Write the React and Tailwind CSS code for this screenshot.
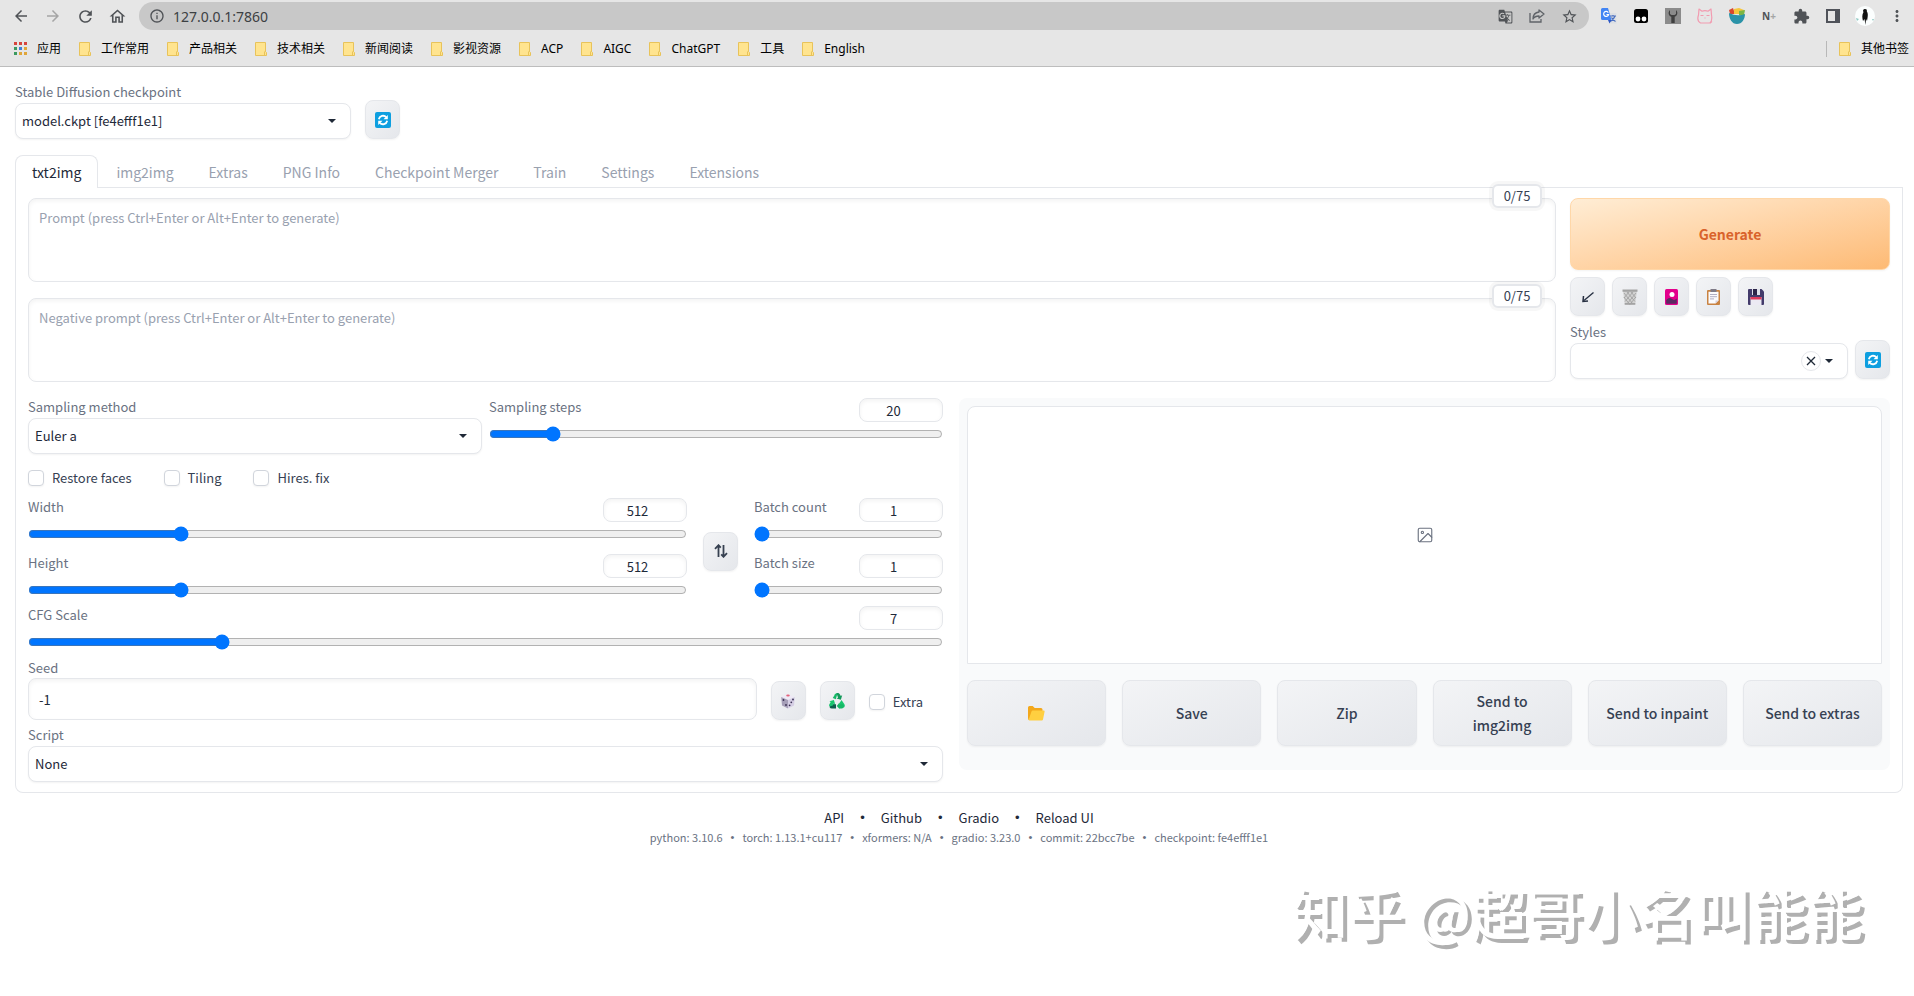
import React, { useState } from "react";
import {
  MdArrowBack,
  MdArrowForward,
  MdRefresh,
  MdOutlineHome,
  MdInfoOutline,
  MdGTranslate,
  MdStarBorder,
  MdExtension,
  MdMoreVert,
} from "react-icons/md";

const bookmarks = ["工作常用", "产品相关", "技术相关", "新闻阅读", "影视资源", "ACP", "AIGC", "ChatGPT", "工具", "English"];

const tabs = ["txt2img", "img2img", "Extras", "PNG Info", "Checkpoint Merger", "Train", "Settings", "Extensions"];

const versions = [
  "python: 3.10.6",
  "torch: 1.13.1+cu117",
  "xformers: N/A",
  "gradio: 3.23.0",
  "commit: 22bcc7be",
  "checkpoint: fe4efff1e1",
];

/* ---------- icons ---------- */

const AppsIcon = () => (
  <svg width="14" height="14" viewBox="0 0 14 14" aria-hidden="true">
    <path fill="#d6453d" d="M0 0h3v3H0zM5 0h3v3H5zM10 0h3v3h-3z" />
    <path fill="#3c9a5f" d="M0 5h3v3H0z" />
    <path fill="#3f7fd6" d="M5 5h3v3H5z" />
    <path fill="#e0a63a" d="M10 5h3v3h-3zM5 10h3v3H5zM10 10h3v3h-3z" />
    <path fill="#3c9a5f" d="M0 10h3v3H0z" />
  </svg>
);

const FolderIcon = () => (
  <svg width="12" height="14" viewBox="0 0 12 14" aria-hidden="true">
    <path d="M.5.5h10v9l1 1v3H.5z" fill="#ffe48f" stroke="#e8c35a" />
    <path d="M9.5 13v-3l1-1" fill="none" stroke="#e8c35a" />
  </svg>
);

const ShareIcon = () => (
  <svg width="16" height="14" viewBox="0 0 16 14" fill="none" stroke="#5f6368" strokeWidth="1.3" aria-hidden="true">
    <path d="M1 4v9h11v-3" />
    <path d="M10 1l5 4-5 4V7C7 7 5 8 4 10c0-4 2-6.500 6-7z" strokeLinejoin="round" />
  </svg>
);

const TranslateExt = () => (
  <svg width="16" height="16" viewBox="0 0 16 16" aria-hidden="true">
    <path d="M6 5h9.500v10.500H8.500z" fill="#dcdfe4" />
    <path d="M0 1.500A1.500 1.500 0 0 1 1.500 0H7l3.500 12h-9A1.500 1.500 0 0 1 0 10.500z" fill="#4285f4" />
    <path d="M7.300 4.600A2.500 2.500 0 1 0 7.600 6.500H5.500" fill="none" stroke="#fff" strokeWidth="1.200" />
    <path d="M9 8h6M12 7v1M14 8c-1 3-3 4.500-4.500 5.500M10.500 9.500c1 2 2 3 4 4" fill="none" stroke="#4a6fbf" strokeWidth="1.200" />
    <path d="M7 12h3.500L8.500 15.500z" fill="#2a56c6" />
  </svg>
);

const MonkeyExt = () => (
  <svg width="14" height="14" viewBox="0 0 14 14" aria-hidden="true">
    <rect width="14" height="14" rx="2.500" fill="#000" />
    <circle cx="4" cy="10" r="2.400" fill="#fff" />
    <circle cx="10" cy="10" r="2.400" fill="#fff" />
  </svg>
);

const WrenchExt = () => (
  <svg width="16" height="16" viewBox="0 0 16 16" aria-hidden="true">
    <rect width="16" height="16" fill="#8b8b8b" />
    <path d="M5 2.200C3 3.500 3 7.500 6.300 8.800V15h3.400V8.800C13 7.500 13 3.500 11 2.200V6L9.500 7h-3L5 6z" fill="#3f3f3f" />
  </svg>
);

const CatExt = () => (
  <svg width="16" height="16" viewBox="0 0 16 16" fill="none" stroke="#f29bb0" strokeWidth="1.200" aria-hidden="true">
    <path d="M2 1l3 2.200q3-1 6 0L14 1l.500 6q1 6-1.500 8H3.500Q-.500 13 1.500 7z" strokeLinejoin="round" />
    <path d="M3.500 7.500h3M9.500 7.500h3M7.500 10h1M13 15l2-1.500" />
  </svg>
);

const BowlExt = () => (
  <svg width="16" height="16" viewBox="0 0 16 16" aria-hidden="true">
    <path d="M0 2l4-2 2 6H1z" fill="#d9482f" />
    <path d="M5 1l5-1 5 2v4H5z" fill="#f6c63c" />
    <path d="M10 3l6-1-1 5h-5z" fill="#7cb645" />
    <path d="M0 5q8 4 16 1c0 5-3 10-8 10S0 11 0 5z" fill="#2b93a8" />
  </svg>
);

const SidePanelIcon = () => (
  <svg width="14" height="14" viewBox="0 0 14 14" aria-hidden="true">
    <path d="M0 0h14v14H0zM2 2v10h7V2z" fill="#50535a" fillRule="evenodd" />
  </svg>
);

const AvatarIcon = () => (
  <svg width="20" height="20" viewBox="0 0 20 20" aria-hidden="true">
    <circle cx="10" cy="10" r="10" fill="#fbfefe" />
    <path d="M1 12l3 1-2 2zM17 13h2l-1 2z" fill="#8fc9c4" />
    <path d="M10 3a1.800 1.800 0 0 1 1.800 2.200C13 7 13 9 12.500 12L12 15l-1-2-.500 6-1-6-1.500 2c-.800-3-1.200-6 .500-9A1.800 1.800 0 0 1 10 3z" fill="#111" />
  </svg>
);

const RefreshIcon = () => (
  <svg width="16" height="16" viewBox="0 0 16 16" aria-hidden="true">
    <rect width="16" height="16" rx="2" fill="#0e9fe0" />
    <path d="M3.800 7.200a4.300 4.300 0 0 1 7.400-2" fill="none" stroke="#fff" strokeWidth="1.800" />
    <path d="M12.200 8.800a4.300 4.300 0 0 1-7.400 2" fill="none" stroke="#fff" strokeWidth="1.800" />
    <path d="M12.800 3v4.300H8.500zM3.200 13V8.700h4.300z" fill="#fff" />
  </svg>
);

const ArrowIcon = () => (
  <svg width="14" height="14" viewBox="0 0 14 14" fill="none" stroke="#273042" strokeWidth="1.300" aria-hidden="true">
    <path d="M12.500 2.500L3 10.500" />
    <path d="M2.500 6l-.500 5.500L7 11" strokeWidth="1.500" />
  </svg>
);

const TrashIcon = () => (
  <svg width="16" height="16" viewBox="0 0 16 16" aria-hidden="true">
    <path d="M1 1.500h14L13.200 15.500H2.800z" fill="#d2d2d2" />
    <path
      d="M2 4l9 11M5 3l8 9.500M9 3l5 6M1.800 8l6 7.500M14 4L5 15M11 3L3 12.500M7 3L2 9M13.800 8l-6 7.500"
      stroke="#9d9d9d"
      strokeWidth=".8"
    />
    <path d="M.500.500h15v2.200H.500zM2.700 14h10.600v1.700H2.700z" fill="#a3a3a3" />
  </svg>
);

const CardIcon = () => (
  <svg width="13" height="16" viewBox="0 0 13 16" aria-hidden="true">
    <rect width="13" height="16" rx="1.500" fill="#e3008c" />
    <path d="M1.200 11q3-3.500 5.500-1.200T11.800 9.500v5.300H1.200z" fill="#5b2a63" />
    <circle cx="7" cy="5.500" r="2.500" fill="#fff" />
  </svg>
);

const ClipboardIcon = () => (
  <svg width="13" height="16" viewBox="0 0 13 16" aria-hidden="true">
    <rect y="1" width="13" height="15" rx="1" fill="#c98342" />
    <path d="M1.500 2.800h10v8.700l-3 3h-7z" fill="#fbfbfd" />
    <path d="M8.500 14.500v-3h3z" fill="#d7d2dd" />
    <path d="M3.500 0h6v3h-6z" fill="#7f7a86" />
    <path d="M3 5.500h7M3 7.700h7M3 9.900h4" stroke="#a9a6bd" strokeWidth=".9" />
  </svg>
);

const FloppyIcon = () => (
  <svg width="16" height="16" viewBox="0 0 16 16" aria-hidden="true">
    <path d="M0 1a1 1 0 0 1 1-1h12.500L16 2.500V15a1 1 0 0 1-1 1H1a1 1 0 0 1-1-1z" fill="#433b6b" />
    <path d="M4 0h8v6H4z" fill="#dfe0ea" />
    <path d="M5 0h4v6H5z" fill="#2c2548" />
    <path d="M2.500 8h11v8h-11z" fill="#eceaf3" />
    <path d="M2.500 8h11v2.500h-11z" fill="#e03a5c" />
  </svg>
);

const DiceIcon = () => (
  <svg width="16" height="16" viewBox="0 0 16 16" aria-hidden="true">
    <path d="M8 1l6.500 3L8 7 1.500 4z" fill="#eee9f5" />
    <path d="M1.200 4L8 7v8.500L2 12.500z" fill="#a69fb8" />
    <path d="M14.800 4L8 7v8.500l6-3z" fill="#d5cee4" />
    <ellipse cx="8" cy="2.500" rx="1.800" ry="1" fill="#e3627a" />
    <circle cx="3.500" cy="7" r=".9" fill="#3a3153" />
    <circle cx="6" cy="12" r=".9" fill="#3a3153" />
    <circle cx="13" cy="6.500" r=".9" fill="#3a3153" />
    <circle cx="11.300" cy="9.300" r=".9" fill="#3a3153" />
    <circle cx="9.600" cy="12.300" r=".9" fill="#3a3153" />
  </svg>
);

const RecycleIcon = () => (
  <svg width="16" height="16" viewBox="0 0 16 16" aria-hidden="true">
    <path d="M3.800 5L6 1.200Q7-.2 8.500.300L6.800 6.200z" fill="#15b866" />
    <path d="M7.500 0h1.800q1 .2 1.500 1.200l1 1.800 1.400-.8-1.300 4.600-4.400-1.200 1.500-.8z" fill="#12995a" />
    <path d="M12.500 7l2.900 4.200q.9 1.800-.4 3.300L10 11z" fill="#18c56e" />
    <path d="M15.200 13.500q-.7 1.900-2.400 2H10.500V16L7.800 13l2.700-3.400v1.600h3.500z" fill="#15b866" />
    <path d="M7 11.300v4.200H2.800q-1.600 0-2.300-1.500l2-3z" fill="#0c5f4d" />
    <path d="M.4 13.500q-.6-1.200 0-2.300l1.300-2.300L.4 8.200l4.500-1.300 1.300 4.400-1.400-.8-1 2z" fill="#18c56e" />
  </svg>
);

const OpenFolderIcon = () => (
  <svg width="17" height="15" viewBox="0 0 17 15" aria-hidden="true">
    <path d="M0 1.500A1.500 1.500 0 0 1 1.500 0h3.200l2 2H13a1.500 1.500 0 0 1 1.500 1.500V8L3 14H.5L0 12z" fill="#f3a81c" />
    <path d="M3.500 5.500q.3-1 1.300-1h11q1 0 .8 1l-1.600 8q-.2 1-1.200 1H1.500q-1 0-.8-1z" fill="#ffcf40" />
  </svg>
);

const SwapIcon = () => (
  <svg width="14" height="14" viewBox="0 0 14 14" fill="none" stroke="#374151" strokeWidth="1.800" aria-hidden="true">
    <path d="M4.500 13V2M1 4.800L4.500 1.200 6.800 3.600M9.500 1v11M13 9.200L9.500 12.800 7.200 10.400" />
  </svg>
);

const ImageIcon = () => (
  <svg
    width="18"
    height="18"
    viewBox="0 0 24 24"
    fill="none"
    stroke="#6b7280"
    strokeWidth="1.500"
    strokeLinecap="round"
    strokeLinejoin="round"
    aria-hidden="true"
  >
    <rect x="3" y="3" width="18" height="18" rx="2" />
    <circle cx="8.500" cy="8.500" r="1.500" />
    <path d="M21 15l-5-5L5 21" />
  </svg>
);

const Caret = () => (
  <svg width="8" height="4" viewBox="0 0 8 4" aria-hidden="true">
    <path d="M0 0h8L4 4z" fill="#1f2937" />
  </svg>
);

/* ---------- form parts ---------- */

const ToolButton = ({ label, children }) => (
  <button
    type="button"
    aria-label={label}
    className="flex h-[39px] w-[35px] shrink-0 items-center justify-center rounded-lg border border-gray-200 bg-linear-to-br from-gray-100 to-gray-200 shadow-xs"
  >
    {children}
  </button>
);

const Dropdown = ({ id, label, value, clearable }) => (
  <div className="min-w-0 flex-1">
    <label htmlFor={id} className="block text-[13px] leading-5 text-gray-500">
      {label}
    </label>
    <div className="relative mt-px">
      <select
        id={id}
        className="block h-9 w-full appearance-none rounded-lg border border-gray-200 bg-white px-1.5 text-[13px] text-gray-800 shadow-xs"
      >
        <option>{value}</option>
      </select>
      <div className="pointer-events-none absolute inset-y-0 right-[15px] flex items-center gap-1">
        {clearable && (
          <span className="flex size-5 items-center justify-center rounded-full border border-gray-200">
            <svg width="10" height="10" viewBox="0 0 10 10" stroke="#1f2937" strokeWidth="1.300" aria-hidden="true">
              <path d="M1 1l8 8M9 1l-8 8" />
            </svg>
          </span>
        )}
        <Caret />
      </div>
    </div>
  </div>
);

const SliderField = ({ id, label, min = 1, max, step = 1, initial }) => {
  const [value, setValue] = useState(initial);
  const handleChange = (e) => setValue(e.target.value);

  return (
    <div className="min-w-0 flex-1">
      <div className="flex h-[25px] items-start justify-between">
        <label htmlFor={id} className="text-[13px] leading-5 text-gray-500">
          {label}
        </label>
        <input
          type="number"
          aria-label={`${label} value`}
          min={min}
          max={max}
          step={step}
          value={value}
          onChange={handleChange}
          className="mt-px h-6 w-[84px] rounded-lg border border-gray-200 bg-white px-2 text-center text-[13px] text-gray-800 shadow-[inset_0_2px_4px_0_rgb(0_0_0/0.05)]"
        />
      </div>
      <input
        id={id}
        type="range"
        min={min}
        max={max}
        step={step}
        value={value}
        onChange={handleChange}
        className="mt-1 block h-4 w-full accent-[#0075ff]"
      />
    </div>
  );
};

const CheckField = ({ id, label }) => (
  <label htmlFor={id} className="flex items-center gap-2 text-[13px] leading-5 text-gray-700">
    <input id={id} type="checkbox" className="size-4 appearance-none rounded border border-gray-300 bg-white shadow-xs" />
    {label}
  </label>
);

const PromptBox = ({ label }) => (
  <div className="relative">
    <textarea
      aria-label={label}
      placeholder={label}
      className="block h-[84px] w-full resize-none rounded-lg border border-gray-200 bg-white px-2.5 py-[9px] text-[13px] leading-5 shadow-[inset_0_2px_4px_0_rgb(0_0_0/0.05)] placeholder:text-gray-400"
    />
    <span className="absolute -top-3.5 right-3.5 flex h-6 w-[50px] items-center justify-center rounded-md border-2 border-gray-200 bg-white text-[13px] text-gray-700 shadow-[0_0_0_3px_rgb(0_0_0/0.03)]">
      0/75
    </span>
  </div>
);

const OutputButton = ({ label, children }) => (
  <button
    type="button"
    aria-label={label}
    className="flex h-[66px] min-w-0 flex-1 items-center justify-center rounded-lg border border-gray-200 bg-linear-to-br from-gray-100 to-gray-200 px-3.5 text-[14px] leading-6 font-medium text-gray-700 shadow-xs"
  >
    {children || label}
  </button>
);

const Dot = () => <span className="font-['Liberation_Sans',sans-serif]">•</span>;

/* ---------- page sections ---------- */

// every toolbar icon sits in a 32px wide slot
const Slot = ({ label, muted, children }) => (
  <button
    type="button"
    aria-label={label}
    className={
      muted
        ? "flex h-7 w-8 shrink-0 items-center justify-center text-[#a5a5a5]"
        : "flex h-7 w-8 shrink-0 items-center justify-center"
    }
  >
    {children}
  </button>
);

const BrowserBar = () => (
  <header className="border-b border-[#bdbdbd] bg-[#e6e6e6] font-['Noto_Sans','Noto_Sans_CJK_SC',sans-serif]">
    <div className="flex h-8 items-center pl-[5px] text-[#505357]">
      <Slot label="Back"><MdArrowBack size={18} /></Slot>
      <Slot label="Forward" muted><MdArrowForward size={18} /></Slot>
      <Slot label="Reload"><MdRefresh size={19} /></Slot>
      <Slot label="Home"><MdOutlineHome size={19} /></Slot>
      <div className="ml-1.5 flex h-7 flex-1 items-center rounded-full bg-[#c8c8c8] pr-1 pl-2.5">
        <MdInfoOutline size={16} />
        <input
          aria-label="Address"
          defaultValue="127.0.0.1:7860"
          className="ml-2 min-w-0 flex-1 bg-transparent text-[14px] text-[#3c4043]"
        />
        <Slot label="Translate"><MdGTranslate size={15} /></Slot>
        <Slot label="Share"><ShareIcon /></Slot>
        <Slot label="Bookmark"><MdStarBorder size={17} /></Slot>
      </div>
      <div className="ml-1 flex items-center pr-px">
        <Slot label="Google Translate"><TranslateExt /></Slot>
        <Slot label="Scripts"><MonkeyExt /></Slot>
        <Slot label="Tools"><WrenchExt /></Slot>
        <Slot label="Cat"><CatExt /></Slot>
        <Slot label="Bowl"><BowlExt /></Slot>
        <Slot label="Notes">
          <span className="text-[10px] font-bold">
            N<span className="text-[#a5a5a5]">+</span>
          </span>
        </Slot>
        <Slot label="Extensions"><MdExtension size={17} /></Slot>
        <Slot label="Side panel"><SidePanelIcon /></Slot>
        <Slot label="Profile"><AvatarIcon /></Slot>
        <Slot label="Menu"><MdMoreVert size={18} /></Slot>
      </div>
    </div>
    <nav className="flex h-[34px] items-center gap-[18px] pr-[5px] pl-3.5 text-[12px] text-black">
      <a href="#" className="flex items-center gap-[9px]">
        <AppsIcon />
        应用
      </a>
      {bookmarks.map((name) => (
        <a key={name} href="#" className="flex items-center gap-2.5">
          <FolderIcon />
          {name}
        </a>
      ))}
      <a href="#" className="ml-auto flex items-center gap-2.5 border-l border-[#b8b8b8] pl-3 leading-4">
        <FolderIcon />
        其他书签
      </a>
    </nav>
  </header>
);

const TopRow = () => (
  <div className="flex gap-3.5">
    <div className="flex min-w-0 flex-1 flex-col gap-4">
      <PromptBox label="Prompt (press Ctrl+Enter or Alt+Enter to generate)" />
      <PromptBox label="Negative prompt (press Ctrl+Enter or Alt+Enter to generate)" />
    </div>
    <div className="w-80">
      <button
        type="button"
        className="block h-[72px] w-full rounded-lg border border-orange-200 bg-linear-to-br from-[#ffedd5] to-[#fdba74] text-[14px] font-bold text-[#d9632b] shadow-xs"
      >
        Generate
      </button>
      <div className="mt-[7px] flex gap-[7px]">
        <ToolButton label="Read parameters"><ArrowIcon /></ToolButton>
        <ToolButton label="Clear prompt"><TrashIcon /></ToolButton>
        <ToolButton label="Extra networks"><CardIcon /></ToolButton>
        <ToolButton label="Apply style"><ClipboardIcon /></ToolButton>
        <ToolButton label="Save style"><FloppyIcon /></ToolButton>
      </div>
      <div className="mt-1.5 flex items-end gap-[7px]">
        <Dropdown id="styles" label="Styles" value="" clearable />
        <ToolButton label="Refresh styles"><RefreshIcon /></ToolButton>
      </div>
    </div>
  </div>
);

const Settings = () => (
  <div className="w-1/2 pr-4">
    <div className="flex gap-[7px]">
      <Dropdown id="sampler" label="Sampling method" value="Euler a" />
      <SliderField id="steps" label="Sampling steps" max={150} initial={20} />
    </div>
    <div className="mt-3.5 flex gap-8">
      <CheckField id="faces" label="Restore faces" />
      <CheckField id="tiling" label="Tiling" />
      <CheckField id="hires" label="Hires. fix" />
    </div>
    <div className="mt-[9px] flex items-center gap-4">
      <div className="flex min-w-0 flex-1 flex-col gap-[11px]">
        <SliderField id="width" label="Width" min={64} max={2048} step={8} initial={512} />
        <SliderField id="height" label="Height" min={64} max={2048} step={8} initial={512} />
      </div>
      <div className="pt-[7px]">
        <ToolButton label="Swap width and height"><SwapIcon /></ToolButton>
      </div>
      <div className="flex w-[189px] flex-col gap-[11px]">
        <SliderField id="count" label="Batch count" max={100} initial={1} />
        <SliderField id="size" label="Batch size" max={8} initial={1} />
      </div>
    </div>
    <div className="mt-[7px]">
      <SliderField id="cfg" label="CFG Scale" max={30} initial={7} />
    </div>
    <div className="mt-2 flex items-end gap-3.5">
      <div className="min-w-0 flex-1">
        <label htmlFor="seed" className="block text-[13px] leading-5 text-gray-500">
          Seed
        </label>
        <input
          id="seed"
          defaultValue="-1"
          className="block h-[42px] w-full rounded-lg border border-gray-200 bg-white px-2.5 text-[13px] text-gray-800 shadow-[inset_0_2px_4px_0_rgb(0_0_0/0.05)]"
        />
      </div>
      <ToolButton label="Random seed"><DiceIcon /></ToolButton>
      <ToolButton label="Reuse seed"><RecycleIcon /></ToolButton>
      <div className="mr-5 pb-2">
        <CheckField id="extra" label="Extra" />
      </div>
    </div>
    <div className="mt-[5px] flex">
      <Dropdown id="script" label="Script" value="None" />
    </div>
  </div>
);

const Output = () => (
  <div className="mt-px w-1/2 self-start rounded-lg bg-gray-50 px-2 pt-2 pb-6">
    <div className="flex h-[258px] items-center justify-center rounded-t-lg border border-gray-200 bg-white">
      <ImageIcon />
    </div>
    <div className="mt-4 flex gap-4">
      <OutputButton label="Open folder"><OpenFolderIcon /></OutputButton>
      <OutputButton label="Save" />
      <OutputButton label="Zip" />
      <OutputButton label="Send to img2img" />
      <OutputButton label="Send to inpaint" />
      <OutputButton label="Send to extras" />
    </div>
  </div>
);

const Footer = () => (
  <footer className="mt-[15px] text-center">
    <div className="flex justify-center gap-4 text-[13px] leading-5 text-gray-800">
      <a href="#">API</a>
      <Dot />
      <a href="#">Github</a>
      <Dot />
      <a href="#">Gradio</a>
      <Dot />
      <a href="#">Reload UI</a>
    </div>
    <div className="mt-px flex justify-center gap-2 text-[11px] leading-4 text-gray-500">
      {versions.map((v, i) => (
        <React.Fragment key={v}>
          {i > 0 && <Dot />}
          <span>{v}</span>
        </React.Fragment>
      ))}
    </div>
  </footer>
);

const App = () => {
  const [active, setActive] = useState("txt2img");

  return (
    <div className="min-h-screen bg-white font-['Noto_Sans_CJK_SC',sans-serif]">
      <BrowserBar />
      <main className="pt-[15px] pr-[11px] pl-[15px]">
        <div className="flex items-end gap-3.5">
          <div className="flex w-[336px]">
            <Dropdown id="checkpoint" label="Stable Diffusion checkpoint" value="model.ckpt [fe4efff1e1]" />
          </div>
          <ToolButton label="Refresh checkpoints"><RefreshIcon /></ToolButton>
        </div>

        <nav className="mt-4 flex h-[33px] gap-px border-b border-gray-200">
          {tabs.map((tab) => (
            <button
              key={tab}
              type="button"
              onClick={() => setActive(tab)}
              className={
                tab === active
                  ? "-mb-px rounded-t-lg border border-b-0 border-gray-200 bg-white px-4 text-[14px] text-gray-800"
                  : "-mb-px border border-b-0 border-transparent px-4 text-[14px] text-gray-400"
              }
            >
              {tab}
            </button>
          ))}
        </nav>

        <section className="rounded-b-lg border border-t-0 border-gray-200 px-3 py-2.5">
          <TopRow />
          <div className="mt-[15px] flex">
            <Settings />
            <Output />
          </div>
        </section>

        <Footer />
        <div className="mt-[38px] pr-10 text-right text-[56px] leading-[56px] font-medium text-white [text-shadow:4px_4px_0_#b0b0b0]">
          知乎 @超哥小名叫能能
        </div>
      </main>
    </div>
  );
};

export default App;
